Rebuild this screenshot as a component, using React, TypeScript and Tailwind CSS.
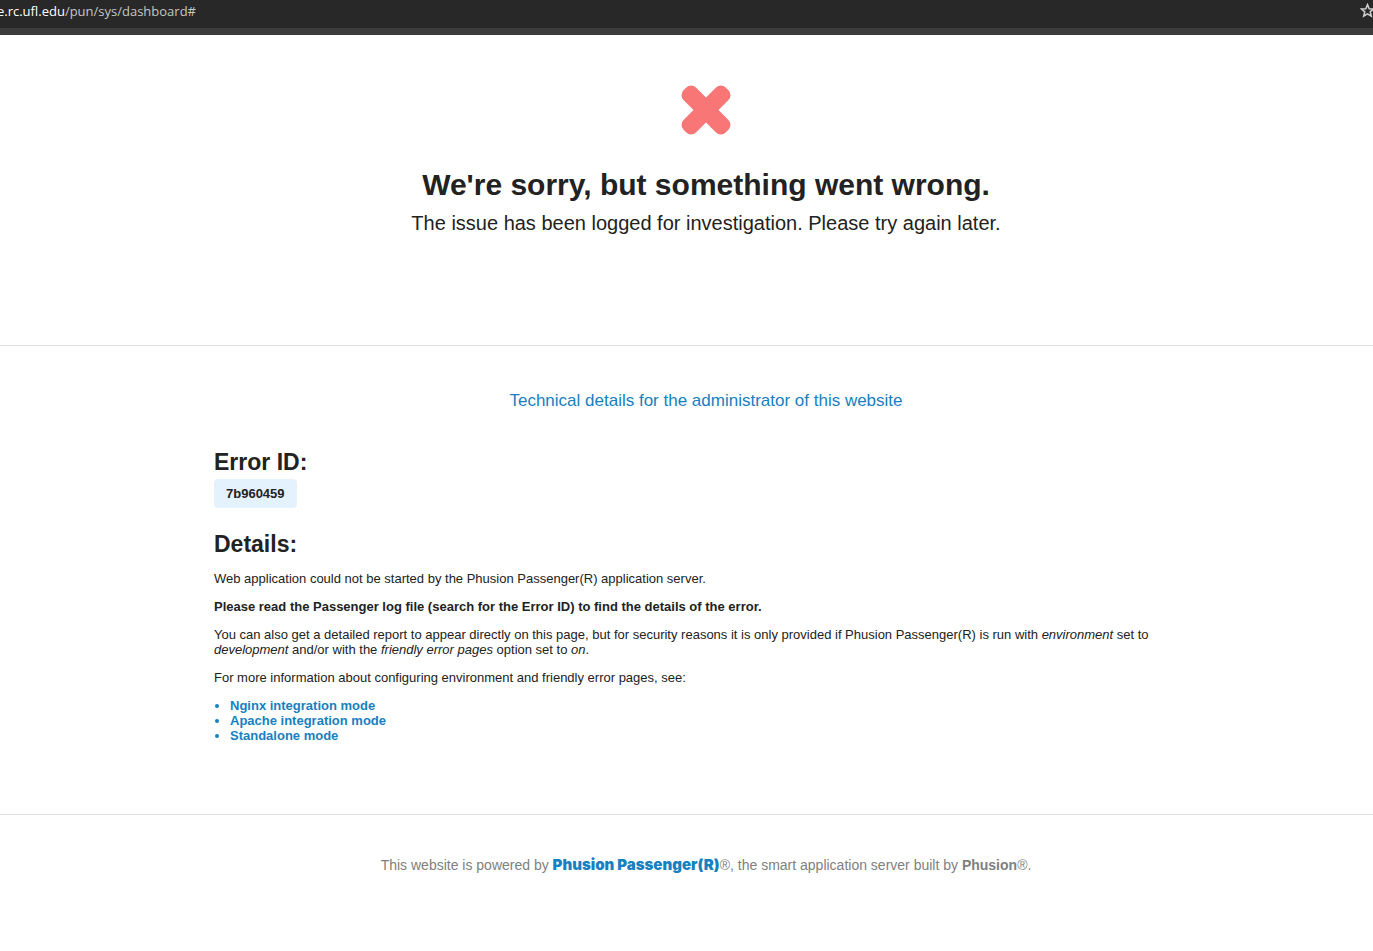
import React from "react";

const guides = [
  { label: "Nginx integration mode", href: "#nginx" },
  { label: "Apache integration mode", href: "#apache" },
  { label: "Standalone mode", href: "#standalone" },
];

function AddressBar() {
  return (
    <header className="flex h-[35px] items-start justify-between overflow-hidden border-b-[7px] border-[#3c3c3c] bg-[#282828]">
      <div className="flex h-6 w-[196px] items-center justify-end overflow-hidden whitespace-nowrap font-['Open_Sans',sans-serif] text-[13px] text-[#c4c7c5]">
        <span className="text-white">e.rc.ufl.edu</span>
        <span>/pun/sys/dashboard#</span>
      </div>
      <button type="button" aria-label="Bookmark this page" className="-mr-[2px] mt-[3px] text-[#d0d0d0]">
        <svg width="15" height="15" viewBox="0 0 15 15" fill="none" stroke="currentColor" strokeWidth="1.5">
          <path d="M7.5 1.6 L9.2 5.7 L13.6 6 L10.2 8.8 L11.3 13.2 L7.5 10.8 L3.7 13.2 L4.8 8.8 L1.4 6 L5.8 5.7 Z" />
        </svg>
      </button>
    </header>
  );
}

function Summary() {
  return (
    <section className="flex h-[311px] flex-col items-center border-b border-[#e1e1e1] pl-[39px] pt-[50px] text-center">
      <svg width="50" height="50" viewBox="0 0 50 50" fill="#f87676" aria-hidden="true">
        <rect x="-4.8" y="16.2" width="59.6" height="17.6" rx="6.8" transform="rotate(45 25 25)" />
        <rect x="-4.8" y="16.2" width="59.6" height="17.6" rx="6.8" transform="rotate(-45 25 25)" />
      </svg>
      <h1 className="mt-8 text-[30px] font-bold leading-9">We're sorry, but something went wrong.</h1>
      <p className="mt-2 text-[20px] leading-6">The issue has been logged for investigation. Please try again later.</p>
    </section>
  );
}

function Details() {
  return (
    <main className="border-b border-[#e1e1e1] pb-[71px] pl-[39px] pt-11">
      <div className="mx-auto max-w-[984px] text-[13px] leading-[15px]">
        <p className="text-center text-[17px] leading-[22px]">
          <a href="#details" className="text-[#1780c0]">Technical details for the administrator of this website</a>
        </p>
        <h2 className="mt-9 text-[23px] font-bold leading-7">Error ID:</h2>
        <div className="mt-[3px] flex">
          <span className="rounded bg-[#e4f2fd] px-3 py-[7px] font-bold">7b960459</span>
        </div>
        <h2 className="mt-[22px] text-[23px] font-bold leading-7">Details:</h2>
        <div className="mt-[13px] flex max-w-[960px] flex-col gap-[13px]">
          <p>Web application could not be started by the Phusion Passenger(R) application server.</p>
          <p className="font-bold">Please read the Passenger log file (search for the Error ID) to find the details of the error.</p>
          <p>
            You can also get a detailed report to appear directly on this page, but for security reasons it is only provided if Phusion Passenger(R) is run with <em>environment</em> set to <em>development</em> and/or with the <em>friendly error pages</em> option set to <em>on</em>.
          </p>
          <p>For more information about configuring environment and friendly error pages, see:</p>
          <ul className="list-disc pl-4 font-bold text-[#1780c0]">
            {guides.map((guide) => (
              <li key={guide.href}>
                <a href={guide.href}>{guide.label}</a>
              </li>
            ))}
          </ul>
        </div>
      </div>
    </main>
  );
}

function Footer() {
  return (
    <footer className="pb-[76px] pl-[39px] pt-10 text-center text-[14px] leading-5 text-[#808080]">
      This website is powered by{" "}
      <a href="#passenger" className="font-['Inter',sans-serif] text-[15px] font-black leading-5 text-[#1780c0]">Phusion Passenger(R)</a>
      ®, the smart application server built by{" "}
      <a href="#phusion" className="font-bold">Phusion</a>®.
    </footer>
  );
}

export default function App() {
  return (
    <div className="min-h-screen bg-white font-['Liberation_Sans',Arial,sans-serif] text-[#222222]">
      <AddressBar />
      <Summary />
      <Details />
      <Footer />
    </div>
  );
}
